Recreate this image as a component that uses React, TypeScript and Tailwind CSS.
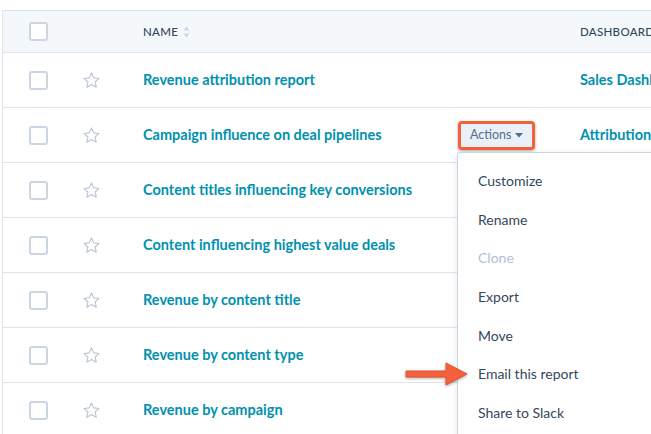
const rows = [
  { name: 'Revenue attribution report', dashboard: 'Sales Dashboard' },
  { name: 'Campaign influence on deal pipelines', dashboard: 'Attribution', actions: true },
  { name: 'Content titles influencing key conversions', dashboard: '' },
  { name: 'Content influencing highest value deals', dashboard: '' },
  { name: 'Revenue by content title', dashboard: '' },
  { name: 'Revenue by content type', dashboard: '' },
  { name: 'Revenue by campaign', dashboard: '' },
];

const menu = [
  { label: 'Customize' },
  { label: 'Rename' },
  { label: 'Clone', disabled: true },
  { label: 'Export' },
  { label: 'Move' },
  { label: 'Email this report' },
  { label: 'Share to Slack' },
];

function Checkbox() {
  return <div className="h-[19px] w-[19px] rounded-[3px] border-2 border-[#cbd6e2] bg-white" />;
}

function Star() {
  return (
    <svg width="19" height="19" viewBox="0 0 24 24" fill="none" stroke="#b8c4d2" strokeWidth="1.4" strokeLinejoin="round">
      <path d="M12 2.5l2.9 6.2 6.6.7-4.9 4.5 1.4 6.6L12 17.1l-5.9 3.4 1.4-6.6L2.5 9.4l6.6-.7z" />
    </svg>
  );
}

function SortIcon() {
  return (
    <svg width="7" height="12" viewBox="0 0 7 12" className="ml-[5px]">
      <path d="M3.5 0.5L6.5 4.5H0.5z" fill="#cbd6e2" />
      <path d="M3.5 11.5L6.5 7.5H0.5z" fill="#cbd6e2" />
    </svg>
  );
}

export default function App() {
  return (
    <div
      className="relative h-[434px] w-[651px] overflow-hidden bg-white"
      style={{ fontFamily: 'Lato, "Open Sans", sans-serif' }}
    >
      <div className="ml-[2px] mt-[10px] border-l border-t border-[#dfe3eb]">
        <div className="flex h-[42px] items-center border-b border-[#dfe3eb] bg-[#f5f8fa]">
          <div className="flex w-[60px] shrink-0 justify-end pr-[15px]">
            <Checkbox />
          </div>
          <div className="w-[80px] shrink-0" />
          <div className="flex w-[437px] shrink-0 items-center text-[11.5px] font-medium tracking-[0.3px] text-[#33475b]">
            NAME
            <SortIcon />
          </div>
          <div className="whitespace-nowrap text-[11.5px] font-medium tracking-[0.3px] text-[#33475b]">DASHBOARD</div>
        </div>
        {rows.map((row) => (
          <div key={row.name} className="flex h-[55px] items-center border-b border-[#dfe3eb]">
            <div className="flex w-[60px] shrink-0 justify-end pr-[15px]">
              <Checkbox />
            </div>
            <div className="flex w-[80px] shrink-0 justify-start pl-[19px]">
              <Star />
            </div>
            <div className="flex w-[315px] shrink-0 items-center whitespace-nowrap text-[14.5px] font-bold text-[#0091ae]">
              {row.name}
            </div>
            <div className="w-[122px] shrink-0">
              {row.actions && (
                <div className="inline-flex rounded-[4px] border-[3px] border-[#f2603c] shadow-[0_1px_3px_rgba(0,0,0,0.35)]">
                  <div className="flex h-[23px] items-center gap-[4px] bg-[#eaf0f6] px-[9px] text-[12.5px] text-[#506e91]">
                    Actions
                    <svg width="8" height="5" viewBox="0 0 8 5">
                      <path d="M0 0h8L4 4.5z" fill="#506e91" />
                    </svg>
                  </div>
                </div>
              )}
            </div>
            <div className="whitespace-nowrap text-[14.5px] font-bold text-[#0091ae]">{row.dashboard}</div>
          </div>
        ))}
      </div>

      <div className="absolute left-[457px] top-[152px] w-[220px] rounded-[3px] border border-[#cbd6e2] bg-white pt-[8px] shadow-[0_2px_6px_rgba(45,62,80,0.12)]">
        {menu.map((item) => (
          <div
            key={item.label}
            className={`flex h-[38.7px] items-center pl-[20px] text-[14px] ${item.disabled ? 'text-[#b0c1d4]' : 'text-[#33475b]'}`}
          >
            {item.label}
          </div>
        ))}
        <div className="h-[40px]" />
      </div>

      <svg className="absolute left-[403px] top-[360px]" width="66" height="28" viewBox="0 0 66 28">
        <path
          d="M3 11h40V3l21 11-21 11v-8H3z"
          fill="#f2603c"
          stroke="#e4522f"
          strokeWidth="1"
          strokeLinejoin="round"
          style={{ filter: 'drop-shadow(0 1px 1.5px rgba(0,0,0,0.35))' }}
        />
      </svg>
    </div>
  );
}
